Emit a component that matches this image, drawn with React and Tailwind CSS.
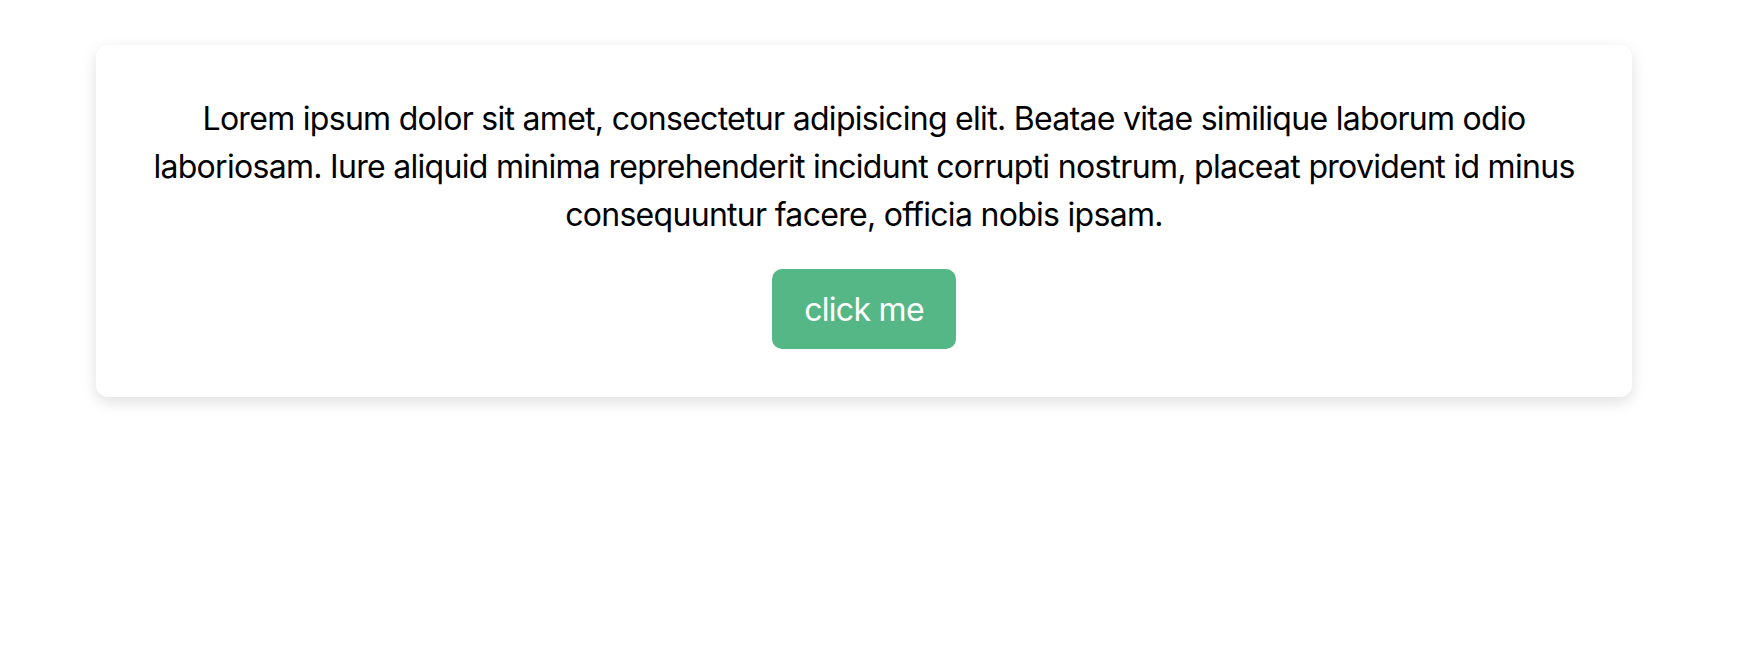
export default function App() {
  return (
    <div className="w-[1728px] px-24 pt-[45px] bg-white min-h-[662px]" style={{ fontFamily: "Inter, 'Noto Sans', sans-serif" }}>
      <div className="bg-white rounded-xl shadow-[0_5px_15px_rgba(0,0,0,0.13)] p-12 flex flex-col items-center">
        <p className="pt-[2px] text-[32px] leading-[48px] tracking-[-0.022em] text-black text-center">
          Lorem ipsum dolor sit amet, consectetur adipisicing elit. Beatae vitae similique laborum odio laboriosam. Iure aliquid minima reprehenderit incidunt corrupti nostrum, placeat provident id minus consequuntur facere, officia nobis ipsam.
        </p>
        <button className="mt-[30px] bg-[#56b786] text-white text-[32px] leading-[48px] tracking-[-0.022em] px-8 pt-[17px] pb-[15px] rounded-[10px]">
          click me
        </button>
      </div>
    </div>
  );
}
